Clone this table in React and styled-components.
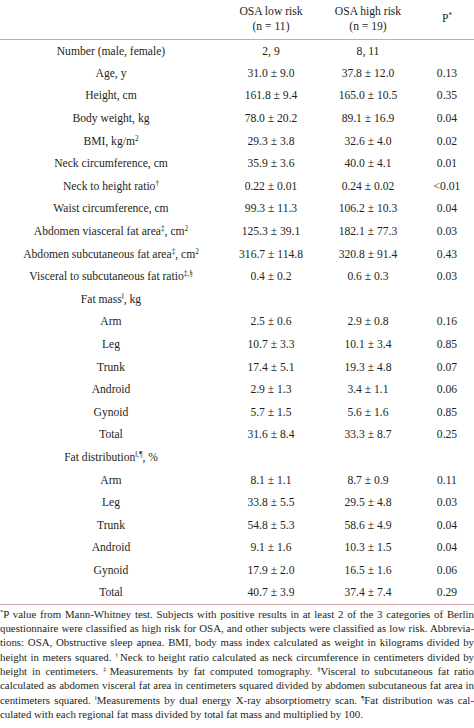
import React from 'react';
import styled, { createGlobalStyle } from 'styled-components';

const GlobalStyle = createGlobalStyle`
  html, body {
    margin: 0;
    padding: 0;
    background: #ffffff;
  }
  body {
    width: 474px;
    overflow: hidden;
    font-family: 'Liberation Serif', 'Times New Roman', serif;
    color: #231f20;
  }
`;

const RULE = '1.5px solid #d6a3a6';

// --- tabela ---
const Page = styled.div`
  width: 474px;
  padding-bottom: 8px;
`;

const Table = styled.table`
  width: 474px;
  table-layout: fixed;
  border-collapse: collapse;
  font-size: 11.6px;
`;

const Col = styled.col`
  width: ${(p) => p.$w}px;
`;

const HeadCell = styled.th`
  height: 37px;
  padding: 0 0 2px ${(p) => p.$shift || 0}px;
  line-height: 15px;
  font-weight: normal;
  text-align: center;
  vertical-align: middle;
  white-space: nowrap;
  border-bottom: ${RULE};
`;

const BodyRow = styled.tr`
  height: 22.6px;

  &:last-child td {
    border-bottom: ${RULE};
  }
`;

const Cell = styled.td`
  padding: 0 0 0 ${(p) => p.$shift || 0}px;
  text-align: center;
  white-space: nowrap;
`;

const Sup = styled.sup`
  font-size: 0.62em;
  line-height: 0;
  vertical-align: 0.55em;
`;

// --- notas de rodapé ---
const Notes = styled.div`
  margin-top: 2px;
  font-size: 10.85px;
  word-spacing: -1px;
  line-height: 14.3px;
`;

const NoteLine = styled.span`
  display: block;
  white-space: nowrap;
  text-align: ${(p) => (p.$last ? 'left' : 'justify')};
  text-align-last: ${(p) => (p.$last ? 'left' : 'justify')};
  word-spacing: ${(p) => (p.$last ? '0' : '-1px')};
`;

const rows = [
  { label: 'Number (male, female)', low: '2, 9', high: '8, 11', p: '' },
  { label: 'Age, y', low: '31.0 ± 9.0', high: '37.8 ± 12.0', p: '0.13' },
  { label: 'Height, cm', low: '161.8 ± 9.4', high: '165.0 ± 10.5', p: '0.35' },
  { label: 'Body weight, kg', low: '78.0 ± 20.2', high: '89.1 ± 16.9', p: '0.04' },
  { label: <>BMI, kg/m<Sup>2</Sup></>, low: '29.3 ± 3.8', high: '32.6 ± 4.0', p: '0.02' },
  { label: 'Neck circumference, cm', low: '35.9 ± 3.6', high: '40.0 ± 4.1', p: '0.01' },
  { label: <>Neck to height ratio<Sup>†</Sup></>, low: '0.22 ± 0.01', high: '0.24 ± 0.02', p: '<0.01' },
  { label: 'Waist circumference, cm', low: '99.3 ± 11.3', high: '106.2 ± 10.3', p: '0.04' },
  { label: <>Abdomen viasceral fat area<Sup>‡</Sup>, cm<Sup>2</Sup></>, low: '125.3 ± 39.1', high: '182.1 ± 77.3', p: '0.03' },
  { label: <>Abdomen subcutaneous fat area<Sup>‡</Sup>, cm<Sup>2</Sup></>, low: '316.7 ± 114.8', high: '320.8 ± 91.4', p: '0.43' },
  { label: <>Visceral to subcutaneous fat ratio<Sup>‡,§</Sup></>, low: '0.4 ± 0.2', high: '0.6 ± 0.3', p: '0.03' },
  { label: <>Fat mass<Sup>‖</Sup>, kg</>, low: '', high: '', p: '' },
  { label: 'Arm', low: '2.5 ± 0.6', high: '2.9 ± 0.8', p: '0.16' },
  { label: 'Leg', low: '10.7 ± 3.3', high: '10.1 ± 3.4', p: '0.85' },
  { label: 'Trunk', low: '17.4 ± 5.1', high: '19.3 ± 4.8', p: '0.07' },
  { label: 'Android', low: '2.9 ± 1.3', high: '3.4 ± 1.1', p: '0.06' },
  { label: 'Gynoid', low: '5.7 ± 1.5', high: '5.6 ± 1.6', p: '0.85' },
  { label: 'Total', low: '31.6 ± 8.4', high: '33.3 ± 8.7', p: '0.25' },
  { label: <>Fat distribution<Sup>‖,¶</Sup>, %</>, low: '', high: '', p: '' },
  { label: 'Arm', low: '8.1 ± 1.1', high: '8.7 ± 0.9', p: '0.11' },
  { label: 'Leg', low: '33.8 ± 5.5', high: '29.5 ± 4.8', p: '0.03' },
  { label: 'Trunk', low: '54.8 ± 5.3', high: '58.6 ± 4.9', p: '0.04' },
  { label: 'Android', low: '9.1 ± 1.6', high: '10.3 ± 1.5', p: '0.04' },
  { label: 'Gynoid', low: '17.9 ± 2.0', high: '16.5 ± 1.6', p: '0.06' },
  { label: 'Total', low: '40.7 ± 3.9', high: '37.4 ± 7.4', p: '0.29' },
];

const notes = [
  <><Sup>*</Sup>P value from Mann-Whitney test. Subjects with positive results in at least 2 of the 3 categories of Berlin</>,
  <>questionnaire were classified as high risk for OSA, and other subjects were classified as low risk. Abbrevia-</>,
  <>tions: OSA, Obstructive sleep apnea. BMI, body mass index calculated as weight in kilograms divided by</>,
  <>height in meters squared. <Sup>†</Sup>Neck to height ratio calculated as neck circumference in centimeters divided by</>,
  <>height in centimeters. <Sup>‡</Sup>Measurements by fat computed tomography. <Sup>§</Sup>Visceral to subcutaneous fat ratio</>,
  <>calculated as abdomen visceral fat area in centimeters squared divided by abdomen subcutaneous fat area in</>,
  <>centimeters squared. <Sup>‖</Sup>Measurements by dual energy X-ray absorptiometry scan. <Sup>¶</Sup>Fat distribution was cal-</>,
  <>culated with each regional fat mass divided by total fat mass and multiplied by 100.</>,
];

const App = () => (
  <Page>
    <GlobalStyle />
    <Table>
      <colgroup>
        <Col $w={222} />
        <Col $w={98} />
        <Col $w={96} />
        <Col $w={58} />
      </colgroup>
      <thead>
        <tr>
          <HeadCell />
          <HeadCell>OSA low risk<br />(n = 11)</HeadCell>
          <HeadCell>OSA high risk<br />(n = 19)</HeadCell>
          <HeadCell $shift={4}>P<Sup>*</Sup></HeadCell>
        </tr>
      </thead>
      <tbody>
        {rows.map((r, i) => (
          <BodyRow key={i}>
            <Cell>{r.label}</Cell>
            <Cell>{r.low}</Cell>
            <Cell>{r.high}</Cell>
            <Cell $shift={4}>{r.p}</Cell>
          </BodyRow>
        ))}
      </tbody>
    </Table>
    <Notes>
      {notes.map((n, i) => (
        <NoteLine key={i} $last={i === notes.length - 1}>{n}</NoteLine>
      ))}
    </Notes>
  </Page>
);

export default App;
